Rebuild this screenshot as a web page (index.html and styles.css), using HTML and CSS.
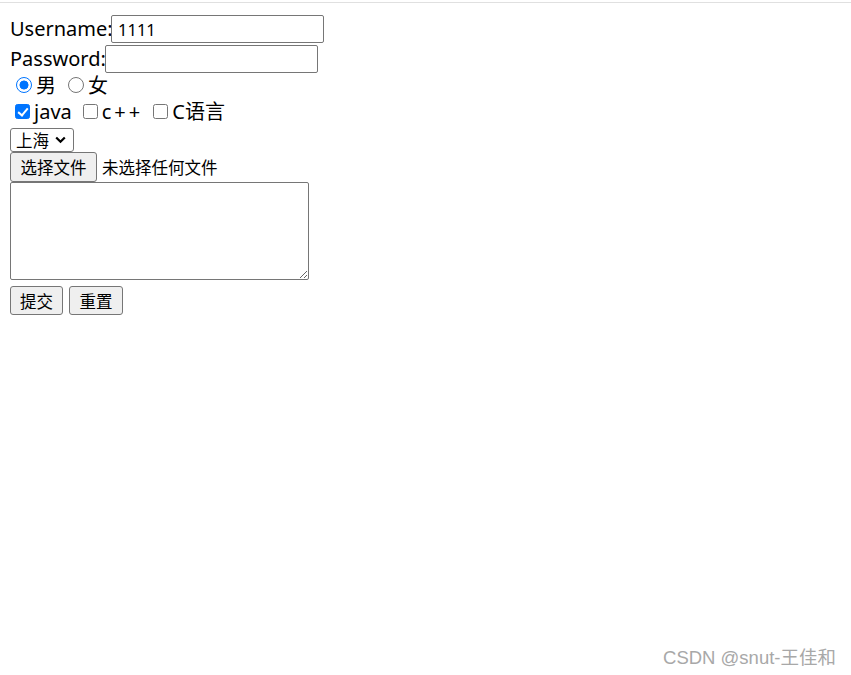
FILE: index.html
```html
<!DOCTYPE html>
<html lang="zh">
<head>
<meta charset="utf-8">
<title>form</title>
<link rel="stylesheet" href="styles.css">
</head>
<body>
<div class="topline"></div>
<form class="form">
  <div class="row row-user">
    <span class="lbl lbl-user">Username:</span>
    <input class="txt txt-user" type="text" value="1111">
  </div>
  <div class="row row-pass">
    <span class="lbl lbl-pass">Password:</span>
    <input class="txt txt-pass" type="password">
  </div>
  <div class="row row-radio">
    <input class="radio r1" type="radio" name="sex" checked>
    <span class="opt">男</span>
    <input class="radio r2" type="radio" name="sex">
    <span class="opt">女</span>
  </div>
  <div class="row row-check">
    <input class="check c1" type="checkbox" checked>
    <span class="opt opt-java">java</span>
    <input class="check c2" type="checkbox">
    <span class="opt opt-cpp">c++</span>
    <input class="check c3" type="checkbox">
    <span class="opt">C语言</span>
  </div>
  <div class="row row-select">
    <div class="select">
      <span class="select-text">上海</span>
      <svg class="chev" width="11" height="8" viewBox="0 0 11 8"><path d="M1.2 1.5 L5.5 5.8 L9.8 1.5" fill="none" stroke="#000" stroke-width="2.2"/></svg>
    </div>
  </div>
  <div class="row row-file">
    <button type="button" class="btn btn-file">选择文件</button>
    <span class="file-name">未选择任何文件</span>
  </div>
  <div class="row row-area">
    <textarea class="area"></textarea>
  </div>
  <div class="row row-btns">
    <button type="button" class="btn btn-submit">提交</button>
    <button type="button" class="btn btn-reset">重置</button>
  </div>
</form>
<div class="watermark">CSDN @snut-王佳和</div>
</body>
</html>
```
FILE: styles.css
```css
html, body {
  margin: 0;
  padding: 0;
  background: #fff;
}
body {
  width: 851px;
  height: 675px;
  position: relative;
  overflow: hidden;
  font-family: "Noto Sans", "Noto Sans CJK SC", sans-serif;
  font-size: 20px;
  color: #000;
}
.topline {
  margin-top: 2px;
  height: 0;
  border-top: 1px solid #e0e0e0;
}
.form {
  display: flex;
  flex-direction: column;
  padding: 11px 10px 0 10px;
}
.row {
  display: flex;
  align-items: center;
  white-space: nowrap;
}
.row-user, .row-pass { height: 30px; }
.lbl { display: inline-block; line-height: 28px; }
.lbl-user { width: 101px; }
.lbl-pass { width: 95px; }
.txt {
  box-sizing: border-box;
  height: 28px;
  width: 213px;
  border: 1px solid #767676;
  border-radius: 2px;
  padding: 0 6px;
  font-family: "Noto Sans", "Noto Sans CJK SC", sans-serif;
  font-size: 16.5px;
  color: #000;
  background: #fff;
  outline: none;
}
.row-radio { height: 22px; }
.row-radio .opt { padding-top: 2px; }
.row-check { height: 31px; }
.opt { line-height: 22px; }
.radio {
  appearance: none;
  -webkit-appearance: none;
  box-sizing: border-box;
  width: 16px;
  height: 16px;
  margin: 0 4px 0 6px;
  border: 1px solid #767676;
  border-radius: 50%;
  background: #fff;
}
.radio:checked {
  border: 1.5px solid #0075ff;
  background: radial-gradient(circle, #0075ff 0 4.2px, #fff 4.8px);
}
.radio.r2 { margin-left: 12px; }
.check {
  appearance: none;
  -webkit-appearance: none;
  box-sizing: border-box;
  position: relative;
  width: 15px;
  height: 15px;
  margin: 0 4px 0 5px;
  border: 1px solid #767676;
  border-radius: 2.5px;
  background: #fff;
}
.check:checked {
  border-color: #0075ff;
  background: #0075ff;
}
.check:checked::after {
  content: "";
  position: absolute;
  left: 4px;
  top: 1px;
  width: 4px;
  height: 8px;
  border-right: 2.2px solid #fff;
  border-bottom: 2.2px solid #fff;
  transform: rotate(40deg);
}
.check.c2 { margin-left: 11px; }
.check.c3 { margin-left: 10px; }
.opt-cpp { letter-spacing: 3px; }
.row-select { margin-top: 1px; height: 24px; }
.select {
  box-sizing: border-box;
  width: 64px;
  height: 24px;
  border: 1px solid #767676;
  border-radius: 3px;
  background: #fff;
  display: flex;
  align-items: center;
  padding-left: 5px;
  font-family: "Noto Sans CJK SC", sans-serif;
  font-size: 16.5px;
}
.select-text { line-height: 22px; }
.chev { margin-left: 6px; }
.btn {
  box-sizing: border-box;
  border: 1px solid #767676;
  border-radius: 3px;
  background: #efefef;
  font-family: "Noto Sans CJK SC", sans-serif;
  font-size: 16.5px;
  color: #000;
  padding: 0;
  margin: 0;
}
.row-file { height: 30px; }
.btn-file { width: 87px; height: 30px; }
.file-name {
  margin-left: 5px;
  font-family: "Noto Sans CJK SC", sans-serif;
  font-size: 16.5px;
}
.row-area { height: 98px; }
.area {
  box-sizing: border-box;
  width: 299px;
  height: 98px;
  margin: 0;
  border: 1px solid #767676;
  border-radius: 2px;
  background: #fff;
  resize: both;
}
.row-btns { margin-top: 6px; height: 29px; }
.btn-submit { width: 53px; height: 29px; }
.btn-reset { width: 54px; height: 29px; margin-left: 6px; }
.watermark {
  position: absolute;
  right: 15px;
  top: 643px;
  font-family: "Liberation Sans", "Noto Sans CJK SC", sans-serif;
  font-size: 18.5px;
  color: #a8a8a8;
}
```
